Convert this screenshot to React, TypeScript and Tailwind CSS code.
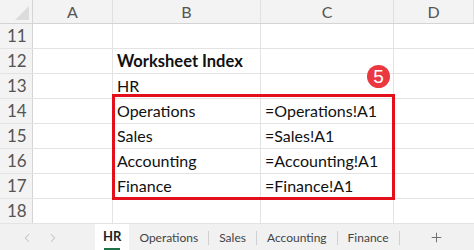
import { ChevronLeft, ChevronRight, Plus } from 'lucide-react';

const cols = [
  { name: 'A', w: 'w-[80px]' },
  { name: 'B', w: 'w-[148px]' },
  { name: 'C', w: 'w-[133px]' },
  { name: 'D', w: 'flex-1' },
];

const rows: { n: number; b?: string; c?: string; bold?: boolean }[] = [
  { n: 11 },
  { n: 12, b: 'Worksheet Index', bold: true },
  { n: 13, b: 'HR' },
  { n: 14, b: 'Operations', c: '=Operations!A1' },
  { n: 15, b: 'Sales', c: '=Sales!A1' },
  { n: 16, b: 'Accounting', c: '=Accounting!A1' },
  { n: 17, b: 'Finance', c: '=Finance!A1' },
  { n: 18 },
];

const tabs = ['Operations', 'Sales', 'Accounting', 'Finance'];

export default function App() {
  return (
    <div className="relative h-[250px] w-[474px] overflow-hidden bg-white font-['Lato','Open_Sans',sans-serif] text-[#111]">
      {/* column headers */}
      <div className="flex h-[24px] border-b border-[#d4d4d4] bg-[#f3f3f3] text-[16px] text-[#555]">
        <div className="relative w-[33px] border-r border-[#d4d4d4]">
          <div className="absolute bottom-[3px] right-[3px] h-0 w-0 border-b-[14px] border-l-[14px] border-b-[#dcdcdc] border-l-transparent" />
        </div>
        {cols.map((c) => (
          <div key={c.name} className={`${c.w} flex items-center justify-center border-r border-[#e0e0e0]`}>
            {c.name}
          </div>
        ))}
      </div>

      {/* grid */}
      {rows.map((r) => (
        <div key={r.n} className="flex h-[25px] border-b border-[#e3e3e3] text-[16px]">
          <div className="flex w-[33px] items-center border-r border-[#d4d4d4] bg-[#f3f3f3] pl-[7px] text-[17px] text-[#555]">
            {r.n}
          </div>
          <div className="w-[80px] border-r border-[#e3e3e3]" />
          <div className={`flex w-[148px] items-center border-r border-[#e3e3e3] pl-[4px] ${r.bold ? 'text-[16.5px] font-bold' : ''}`}>
            {r.b}
          </div>
          <div className="flex w-[133px] items-center border-r border-[#e3e3e3] pl-[4px]">{r.c}</div>
          <div className="flex-1" />
        </div>
      ))}

      {/* highlight box + badge */}
      <div className="absolute left-[112px] top-[94px] h-[106px] w-[283px] border-[3px] border-[#e3101c]" />
      <svg className="absolute left-[367px] top-[65px]" width="23" height="23" viewBox="0 0 23 23">
        <circle cx="11.5" cy="11.5" r="11.5" fill="#e9383f" />
        <text x="11.5" y="18" textAnchor="middle" fontSize="19" fill="#fff" fontFamily="Liberation Sans, sans-serif">
          5
        </text>
      </svg>

      {/* sheet tabs */}
      <div className="flex h-[27px] items-center bg-[#f1f1f1] text-[12px] text-[#444]">
        <div className="flex w-[95px] items-center gap-[12px] pl-[20px] text-[#b0b0b0]">
          <ChevronLeft size={14} strokeWidth={1.5} />
          <ChevronRight size={14} strokeWidth={1.5} />
        </div>
        <div className="flex h-full flex-col items-center justify-center bg-white px-[8px] pt-[2px] text-[13px] font-bold">
          <span className="text-[#222]">HR</span>
          <span className="mt-[1px] h-[2px] w-[16px] bg-[#1e7145]" />
        </div>
        {tabs.map((t) => (
          <div key={t} className="flex items-center">
            <span className="px-[10px]">{t}</span>
            <span className="h-[14px] w-px bg-[#d0d0d0]" />
          </div>
        ))}
        <div className="flex flex-1 justify-center text-[#666]">
          <Plus size={15} strokeWidth={1.5} />
        </div>
      </div>
    </div>
  );
}
